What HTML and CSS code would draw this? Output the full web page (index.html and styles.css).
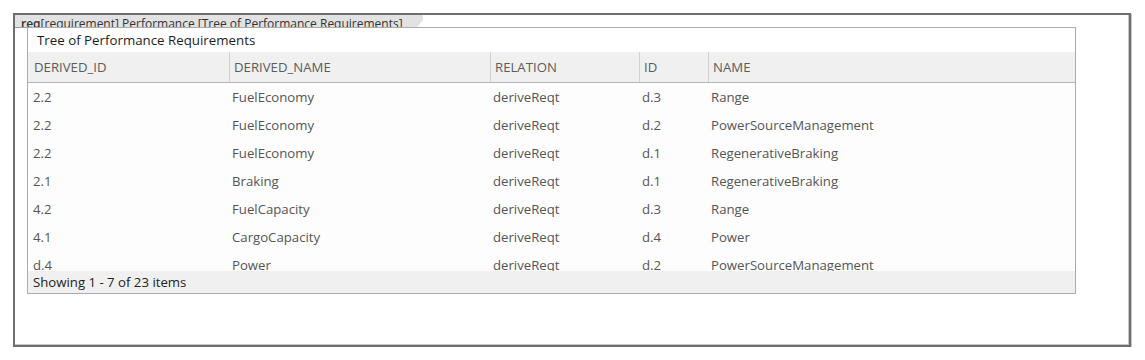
FILE: index.html
```html
<!DOCTYPE html>
<html lang="en">
<head>
    <meta charset="UTF-8">
    <title>Tree of Performance Requirements</title>
    <link rel="stylesheet" href="styles.css">
</head>
<body>
    <div class="frame">
        <div class="tab"><b>req</b>[requirement] Performance [Tree of Performance Requirements]</div>
        <div class="panel">
            <div class="panel-title">Tree of Performance Requirements</div>
            <div class="grid-head">
                <div class="cell c1">DERIVED_ID</div>
                <div class="cell c2">DERIVED_NAME</div>
                <div class="cell c3">RELATION</div>
                <div class="cell c4">ID</div>
                <div class="cell c5">NAME</div>
            </div>
            <div class="grid-body">
                <div class="row"><div class="cell c1">2.2</div><div class="cell c2">FuelEconomy</div><div class="cell c3">deriveReqt</div><div class="cell c4">d.3</div><div class="cell c5">Range</div></div>
                <div class="row"><div class="cell c1">2.2</div><div class="cell c2">FuelEconomy</div><div class="cell c3">deriveReqt</div><div class="cell c4">d.2</div><div class="cell c5">PowerSourceManagement</div></div>
                <div class="row"><div class="cell c1">2.2</div><div class="cell c2">FuelEconomy</div><div class="cell c3">deriveReqt</div><div class="cell c4">d.1</div><div class="cell c5">RegenerativeBraking</div></div>
                <div class="row"><div class="cell c1">2.1</div><div class="cell c2">Braking</div><div class="cell c3">deriveReqt</div><div class="cell c4">d.1</div><div class="cell c5">RegenerativeBraking</div></div>
                <div class="row"><div class="cell c1">4.2</div><div class="cell c2">FuelCapacity</div><div class="cell c3">deriveReqt</div><div class="cell c4">d.3</div><div class="cell c5">Range</div></div>
                <div class="row"><div class="cell c1">4.1</div><div class="cell c2">CargoCapacity</div><div class="cell c3">deriveReqt</div><div class="cell c4">d.4</div><div class="cell c5">Power</div></div>
                <div class="row"><div class="cell c1">d.4</div><div class="cell c2">Power</div><div class="cell c3">deriveReqt</div><div class="cell c4">d.2</div><div class="cell c5">PowerSourceManagement</div></div>
            </div>
            <div class="pager">Showing 1 - 7 of 23 items</div>
        </div>
    </div>
</body>
</html>
```

FILE: styles.css
```css
body {
    margin: 0;
    background-color: #ffffff;
    font-family: 'Open Sans', 'Noto Sans', sans-serif;
}

.frame {
    position: relative;
    margin: 13px 0 0 13px;
    width: 1114px;
    height: 330px;
    border: 2px solid #6e6e6e;
    box-shadow: -1px -1px 0 #c8c8c8 inset, 1px 1px 0 #c8c8c8;
}

.tab {
    width: 402px;
    height: 12px;
    padding-left: 6px;
    overflow: hidden;
    font-size: 12px;
    line-height: 18px;
    color: #333;
    white-space: nowrap;
    background-color: #e2e2e2;
    border-bottom: 1px solid #9a9a9a;
    clip-path: polygon(0 0, 100% 0, 100% 40%, calc(100% - 7px) 100%, 0 100%);
}

.tab b {
    font-weight: 600;
}

.panel {
    position: absolute;
    left: 12px;
    top: 12px;
    width: 1047px;
    height: 265px;
    display: flex;
    flex-direction: column;
    background-color: #ffffff;
    border: 1px solid #ababab;
}

.panel-title {
    height: 24px;
    padding-left: 9px;
    font-size: 13.3px;
    line-height: 25px;
    color: #1e1e1e;
}

.grid-head {
    display: flex;
    height: 30px;
    background-color: #f0f0f0;
    border-bottom: 1px solid #b4b4b4;
}

.grid-head .cell {
    line-height: 30px;
    padding-left: 4px;
    color: #5b5b5b;
    border-left: 1px solid #d0d0d0;
}

.grid-head .c1 {
    padding-left: 6px;
    border-left: none;
}

.grid-body {
    flex: 1;
    overflow: hidden;
    background-color: #fdfdfd;
}

.row {
    display: flex;
    height: 28px;
}

.row .cell {
    line-height: 28px;
    padding-left: 3px;
    color: #555555;
}

.row .c1 {
    padding-left: 5px;
}

.cell {
    box-sizing: border-box;
    font-size: 13.2px;
    white-space: nowrap;
    overflow: hidden;
}

.c1 { width: 201px; }
.c2 { width: 261px; }
.c3 { width: 149px; }
.c4 { width: 69px; }
.c5 { flex: 1; }

.pager {
    height: 22px;
    padding-left: 5px;
    font-size: 13.2px;
    line-height: 23px;
    color: #222;
    background-color: #f0f0f0;
}
```
